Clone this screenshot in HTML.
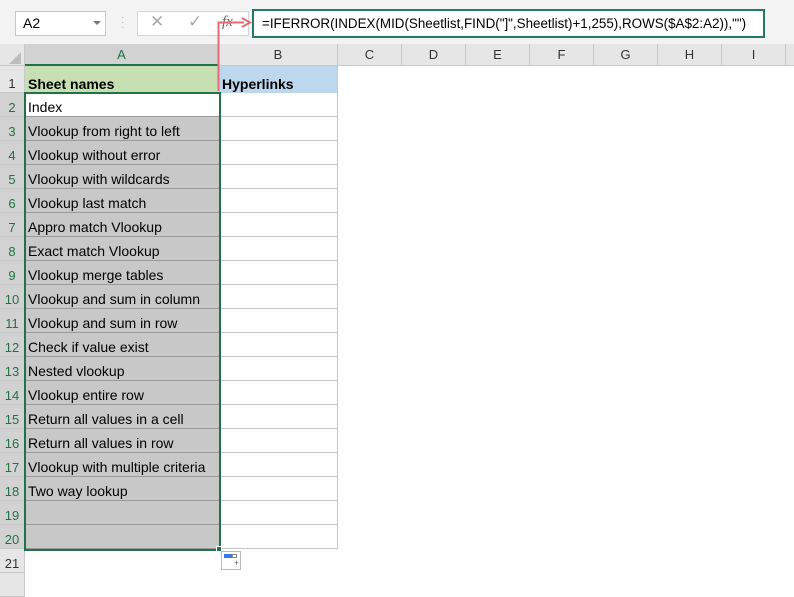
<!DOCTYPE html>
<html><head><style>
*{margin:0;padding:0;box-sizing:border-box}
body{width:794px;height:577px;position:relative;background:#fff;font-family:"Liberation Sans",Arial,sans-serif;overflow:hidden}
.a{position:absolute}
.ch{position:absolute;top:44px;height:22px;background:#e6e6e6;border-right:1px solid #c8c8c8;border-bottom:1px solid #c8c8c8;font-size:13px;color:#333;text-align:center;line-height:22px}
.rh{position:absolute;left:0;width:25px;background:#e6e6e6;border-bottom:1px solid #c8c8c8;border-right:1px solid #c8c8c8;font-size:13px;color:#333;text-align:center}
.ca{position:absolute;left:25px;width:194px;height:24px;background:#c8c8c8;border-bottom:1px solid #9a9a9a;font-size:14px;line-height:28px;padding-left:3px;color:#000}
.cb{position:absolute;left:219px;width:119px;height:24px;border-bottom:1px solid #c6c6c6;border-right:1px solid #c6c6c6}
</style></head><body>
<div class="a" style="left:0;top:0;width:794px;height:44px;background:#f3f3f3"></div>
<div class="a" style="left:15px;top:11px;width:91px;height:25px;background:#fff;border:1px solid #c6c6c6;font-size:14px;line-height:23px;padding-left:7px">A2</div>
<div class="a" style="left:93px;top:21px;width:0;height:0;border-left:4px solid transparent;border-right:4px solid transparent;border-top:4px solid #777"></div>
<div class="a" style="left:121px;top:15px;color:#bbb;font-size:10px;line-height:5px">·<br>·<br>·</div>
<div class="a" style="left:137px;top:11px;width:112px;height:25px;background:#fff;border:1px solid #d6d6d6"></div>
<div class="a" style="left:150px;top:12px;color:#aaa;font-size:17px">✕</div>
<div class="a" style="left:188px;top:12px;color:#aaa;font-size:17px">✓</div>
<div class="a" style="left:222px;top:14px;color:#666;font-size:15px;font-style:italic;font-family:'Liberation Serif',serif">fx</div>
<div class="a" style="left:252px;top:9px;width:513px;height:29px;background:#fff;border:2px solid #1f7a6a;font-size:13.4px;line-height:26px;padding-left:8px;white-space:nowrap">=IFERROR(INDEX(MID(Sheetlist,FIND("]",Sheetlist)+1,255),ROWS($A$2:A2)),"")</div>
<div class="a" style="left:0;top:44px;width:25px;height:22px;background:#e6e6e6;border-right:1px solid #c8c8c8;border-bottom:1px solid #c8c8c8"></div>
<div class="a" style="left:9px;top:52px;width:0;height:0;border-left:12px solid transparent;border-bottom:12px solid #bdbdbd"></div>
<div class="ch" style="left:25px;width:194px;background:#d2d2d2;border-bottom:2px solid #217346;color:#217346">A</div>
<div class="ch" style="left:219px;width:119px">B</div>
<div class="ch" style="left:338px;width:64px">C</div>
<div class="ch" style="left:402px;width:64px">D</div>
<div class="ch" style="left:466px;width:64px">E</div>
<div class="ch" style="left:530px;width:64px">F</div>
<div class="ch" style="left:594px;width:64px">G</div>
<div class="ch" style="left:658px;width:64px">H</div>
<div class="ch" style="left:722px;width:64px">I</div>
<div class="ch" style="left:786px;width:10px"></div>
<div class="rh" style="top:66px;height:27px;line-height:36px">1</div>
<div class="a" style="left:25px;top:66px;width:194px;height:27px;background:#c6e0b4;font-weight:bold;font-size:14px;line-height:36px;padding-left:3px">Sheet names</div>
<div class="a" style="left:219px;top:66px;width:119px;height:27px;background:#bdd7ee;border-right:1px solid #c6c6c6;font-weight:bold;font-size:14px;line-height:36px;padding-left:3px">Hyperlinks</div>
<div id="rows"></div>
<script>
var n=["Index","Vlookup from right to left","Vlookup without error","Vlookup with wildcards","Vlookup last match","Appro match Vlookup","Exact match Vlookup","Vlookup merge tables","Vlookup and sum in column","Vlookup and sum in row","Check if value exist","Nested vlookup","Vlookup entire row","Return all values in a cell","Return all values in row","Vlookup with multiple criteria","Two way lookup","",""];
var h="";
for(var i=0;i<19;i++){var t=93+24*i;
h+='<div class="rh" style="top:'+t+'px;height:24px;line-height:29px;background:#d2d2d2;color:#217346">'+(i+2)+'</div>';
h+='<div class="ca" style="top:'+t+'px;'+(i==0?'background:#fff':'')+'">'+n[i]+'</div>';
h+='<div class="cb" style="top:'+t+'px"></div>';}
h+='<div class="rh" style="top:549px;height:24px;line-height:29px">21</div>';
h+='<div class="rh" style="top:573px;height:24px"></div>';
document.getElementById("rows").innerHTML=h;
</script>
<div class="a" style="left:24px;top:92px;width:197px;height:459px;border:2px solid #217346"></div>
<div class="a" style="left:216px;top:546px;width:6px;height:6px;background:#217346;border:1px solid #fff"></div>
<div class="a" style="left:221px;top:551px;width:20px;height:19px;border:1px solid #bbb;background:#fff"></div>
<div class="a" style="left:224px;top:554px;width:8px;height:4px;background:#3b78e7"></div>
<div class="a" style="left:232px;top:554px;width:5px;height:4px;border:1px solid #888"></div>
<div class="a" style="left:234px;top:559px;font-size:9px;color:#666;line-height:9px">+</div>
<svg class="a" style="left:0;top:0" width="794" height="100"><path d="M218.5 91 V22.5 H244" stroke="#e56b76" stroke-width="2" fill="none"/><path d="M242 18 L250 22.5 L242 27" stroke="#e56b76" stroke-width="2" fill="none"/></svg>
</body></html>
